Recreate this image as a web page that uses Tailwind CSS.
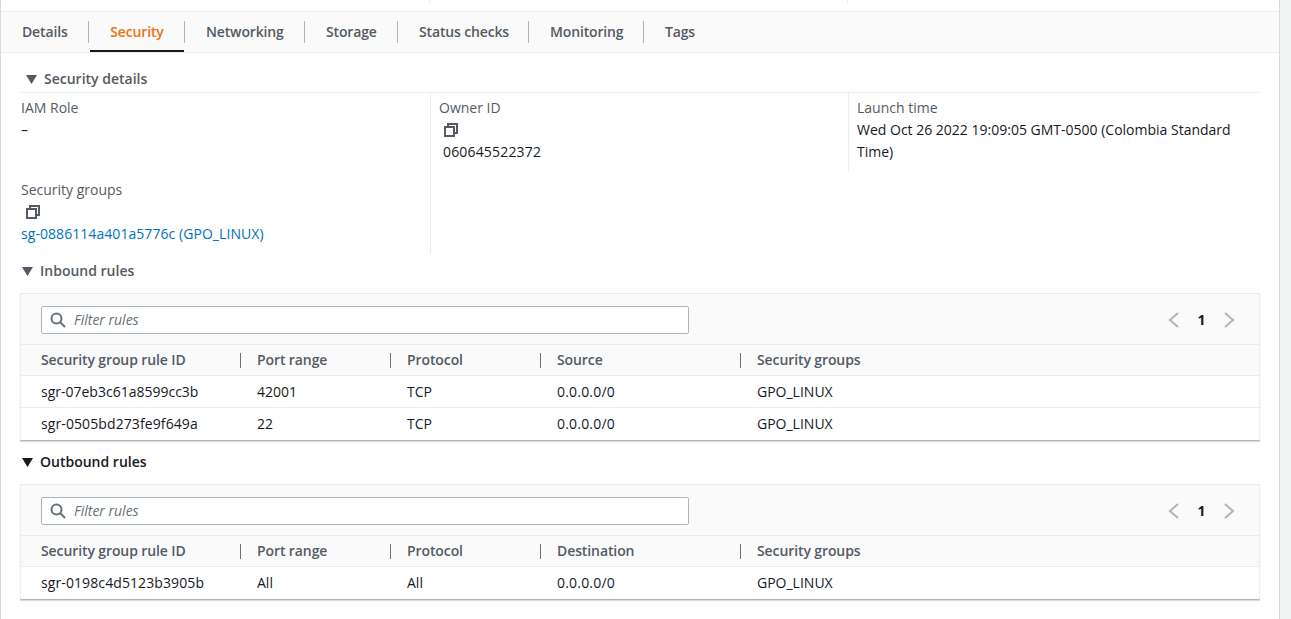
<!DOCTYPE html>
<html lang="en">
<head>
  <meta charset="UTF-8">
  <title>Security</title>
  <script src="https://cdn.jsdelivr.net/npm/@tailwindcss/browser@4"></script>
</head>
<body class="bg-white text-[#16191f] font-['Open_Sans','Noto_Sans',sans-serif] text-[14px] leading-[22px] overflow-hidden">
  <div class="flex w-[1291px] h-[619px] overflow-hidden">
    <div class="w-[1px] bg-[#d5dbdb] shrink-0"></div>
    <main class="w-[1278px] shrink-0">

      <!-- leftover of the panel above -->
      <div class="grid grid-cols-[429px_418px_1fr] h-[11px]">
        <div class="border-r border-[#eaeded] h-[3px]"></div>
        <div class="border-r border-[#eaeded] h-[3px]"></div>
      </div>

      <!-- tabs -->
      <nav class="flex h-[42px] bg-[#fafafa] border-y border-[#eaeded] font-semibold tracking-[-0.15px] text-[#545b64]">
        <a class="flex items-center pl-[21px] w-[87px] h-[40px]">Details</a>
        <span class="w-px h-[22px] mt-[9px] mr-[1px] bg-[#aab7b8]"></span>
        <a class="flex items-center justify-center w-[94px] h-[40px] pt-[2px] border-b-2 border-[#16191f] text-[#ec7211]">Security</a>
        <span class="w-px h-[22px] mt-[9px] bg-[#aab7b8]"></span>
        <a class="flex items-center pl-[21px] w-[119px] h-[40px]">Networking</a>
        <span class="w-px h-[22px] mt-[9px] bg-[#aab7b8]"></span>
        <a class="flex items-center pl-[21px] w-[92px] h-[40px]">Storage</a>
        <span class="w-px h-[22px] mt-[9px] bg-[#aab7b8]"></span>
        <a class="flex items-center pl-[21px] w-[130px] h-[40px]">Status checks</a>
        <span class="w-px h-[22px] mt-[9px] bg-[#aab7b8]"></span>
        <a class="flex items-center pl-[21px] w-[114px] h-[40px]">Monitoring</a>
        <span class="w-px h-[22px] mt-[9px] bg-[#aab7b8]"></span>
        <a class="flex items-center pl-[21px] h-[40px]">Tags</a>
      </nav>

      <div class="pl-[19px] w-[1259px]">
        <!-- security details -->
        <div class="flex items-center h-[40px] ml-[1px] mr-[1px] pt-[13px] border-b border-[#eaeded] font-semibold text-[#545b64]">
          <svg class="w-[11px] h-[9px] ml-[5px] mr-[7px]" viewBox="0 0 11 9"><path d="M0 0H11L5.5 9Z" fill="#545b64"/></svg>
          Security details
        </div>
        <div class="grid grid-cols-[410px_418px_1fr] ml-[1px] h-[161px]">
          <div class="border-r border-[#eaeded] flex flex-col">
            <div class="text-[#545b64] mt-[4px]">IAM Role</div>
            <div>–</div>
            <div class="text-[#545b64] mt-[38px]">Security groups</div>
            <div class="h-[22px] flex items-center pl-[5px]">
              <svg class="w-[14px] h-[14px]" viewBox="0 0 14 14" fill="none" stroke="#545b64" stroke-width="2"><rect x="1" y="4" width="9" height="9"/><path d="M4 4V1H13V10H10"/></svg>
            </div>
            <a class="text-[#0073bb] tracking-[0.06px]">sg-0886114a401a5776c (GPO_LINUX)</a>
          </div>
          <div class="border-r border-[#eaeded] h-[78px] pl-[8px] flex flex-col">
            <div class="text-[#545b64] mt-[4px]">Owner ID</div>
            <div class="h-[22px] flex items-center pl-[5px]">
              <svg class="w-[14px] h-[14px]" viewBox="0 0 14 14" fill="none" stroke="#545b64" stroke-width="2"><rect x="1" y="4" width="9" height="9"/><path d="M4 4V1H13V10H10"/></svg>
            </div>
            <div class="pl-[4px] tracking-[0.17px]">060645522372</div>
          </div>
          <div class="pl-[8px]">
            <div class="text-[#545b64] mt-[4px]">Launch time</div>
            <div class="w-[385px]">Wed Oct 26 2022 19:09:05 GMT-0500 (Colombia Standard Time)</div>
          </div>
        </div>

        <!-- inbound rules -->
        <div class="flex items-center h-[22px] ml-[1px] mt-[6px] font-semibold text-[#545b64]">
          <svg class="w-[11px] h-[9px] ml-[1px] mr-[7px]" viewBox="0 0 11 9"><path d="M0 0H11L5.5 9Z" fill="#545b64"/></svg>
          Inbound rules
        </div>
        <section class="mt-[11px] border border-[#eaeded] border-b-[#aab7b8] shadow-[0_1px_1px_0_rgba(0,28,36,0.15)]">
          <div class="flex items-center justify-between h-[51px] pt-[2px] bg-[#fafafa] pl-[20px] border-b border-[#eaeded]">
            <div class="flex items-center w-[648px] h-[28px] bg-white border border-[#aab7b8] rounded-[2px]">
              <svg class="w-[16px] h-[16px] ml-[8px] mr-[8px]" viewBox="0 0 16 16" fill="none" stroke="#687078" stroke-width="2"><circle cx="6.5" cy="6.5" r="5"/><path d="M10 10L15 15"/></svg>
              <span class="italic text-[#687078]">Filter rules</span>
            </div>
            <div class="flex items-center mr-[24px] text-[#16191f] font-bold">
              <svg class="w-[11px] h-[16px]" viewBox="0 0 11 16" fill="none" stroke="#aab7b8" stroke-width="2"><path d="M10 1L2 8L10 15"/></svg>
              <span class="w-[45px] text-center">1</span>
              <svg class="w-[11px] h-[16px]" viewBox="0 0 11 16" fill="none" stroke="#aab7b8" stroke-width="2"><path d="M1 1L9 8L1 15"/></svg>
            </div>
          </div>
          <div class="grid grid-cols-[220px_150px_150px_200px_1fr] items-center h-[31px] bg-[#fafafa] border-b border-[#eaeded] font-semibold tracking-[-0.1px] text-[#545b64]">
            <div class="pl-[20px] h-[15px] leading-[13px] border-r border-[#687078]">Security group rule ID</div>
            <div class="pl-[16px] h-[15px] leading-[13px] border-r border-[#687078]">Port range</div>
            <div class="pl-[16px] h-[15px] leading-[13px] border-r border-[#687078]">Protocol</div>
            <div class="pl-[16px] h-[15px] leading-[13px] border-r border-[#687078]">Source</div>
            <div class="pl-[16px] h-[15px] leading-[13px]">Security groups</div>
          </div>
          <div class="grid grid-cols-[220px_150px_150px_200px_1fr] items-center h-[32px] border-b border-[#eaeded]">
            <div class="pl-[20px]">sgr-07eb3c61a8599cc3b</div>
            <div class="pl-[16px]">42001</div>
            <div class="pl-[16px]">TCP</div>
            <div class="pl-[16px] tracking-[0.2px]">0.0.0.0/0</div>
            <div class="pl-[16px]">GPO_LINUX</div>
          </div>
          <div class="grid grid-cols-[220px_150px_150px_200px_1fr] items-center h-[32px]">
            <div class="pl-[20px] tracking-[0.1px]">sgr-0505bd273fe9f649a</div>
            <div class="pl-[16px]">22</div>
            <div class="pl-[16px]">TCP</div>
            <div class="pl-[16px] tracking-[0.2px]">0.0.0.0/0</div>
            <div class="pl-[16px]">GPO_LINUX</div>
          </div>
        </section>

        <!-- outbound rules -->
        <div class="flex items-center h-[22px] ml-[1px] mt-[10px] font-semibold text-[#16191f]">
          <svg class="w-[11px] h-[9px] ml-[1px] mr-[7px]" viewBox="0 0 11 9"><path d="M0 0H11L5.5 9Z" fill="#16191f"/></svg>
          Outbound rules
        </div>
        <section class="mt-[11px] border border-[#eaeded] border-b-[#aab7b8] shadow-[0_1px_1px_0_rgba(0,28,36,0.15)]">
          <div class="flex items-center justify-between h-[51px] pt-[2px] bg-[#fafafa] pl-[20px] border-b border-[#eaeded]">
            <div class="flex items-center w-[648px] h-[28px] bg-white border border-[#aab7b8] rounded-[2px]">
              <svg class="w-[16px] h-[16px] ml-[8px] mr-[8px]" viewBox="0 0 16 16" fill="none" stroke="#687078" stroke-width="2"><circle cx="6.5" cy="6.5" r="5"/><path d="M10 10L15 15"/></svg>
              <span class="italic text-[#687078]">Filter rules</span>
            </div>
            <div class="flex items-center mr-[24px] text-[#16191f] font-bold">
              <svg class="w-[11px] h-[16px]" viewBox="0 0 11 16" fill="none" stroke="#aab7b8" stroke-width="2"><path d="M10 1L2 8L10 15"/></svg>
              <span class="w-[45px] text-center">1</span>
              <svg class="w-[11px] h-[16px]" viewBox="0 0 11 16" fill="none" stroke="#aab7b8" stroke-width="2"><path d="M1 1L9 8L1 15"/></svg>
            </div>
          </div>
          <div class="grid grid-cols-[220px_150px_150px_200px_1fr] items-center h-[31px] bg-[#fafafa] border-b border-[#eaeded] font-semibold tracking-[-0.1px] text-[#545b64]">
            <div class="pl-[20px] h-[15px] leading-[13px] border-r border-[#687078]">Security group rule ID</div>
            <div class="pl-[16px] h-[15px] leading-[13px] border-r border-[#687078]">Port range</div>
            <div class="pl-[16px] h-[15px] leading-[13px] border-r border-[#687078]">Protocol</div>
            <div class="pl-[16px] h-[15px] leading-[13px] border-r border-[#687078]">Destination</div>
            <div class="pl-[16px] h-[15px] leading-[13px]">Security groups</div>
          </div>
          <div class="grid grid-cols-[220px_150px_150px_200px_1fr] items-center h-[32px]">
            <div class="pl-[20px] tracking-[0.1px]">sgr-0198c4d5123b3905b</div>
            <div class="pl-[16px]">All</div>
            <div class="pl-[16px]">All</div>
            <div class="pl-[16px] tracking-[0.2px]">0.0.0.0/0</div>
            <div class="pl-[16px]">GPO_LINUX</div>
          </div>
        </section>
      </div>
    </main>
    <!-- right rail -->
    <div class="flex-1 bg-[#f2f3f3] border-l border-[#d5dbdb]"></div>
  </div>
</body>
</html>
